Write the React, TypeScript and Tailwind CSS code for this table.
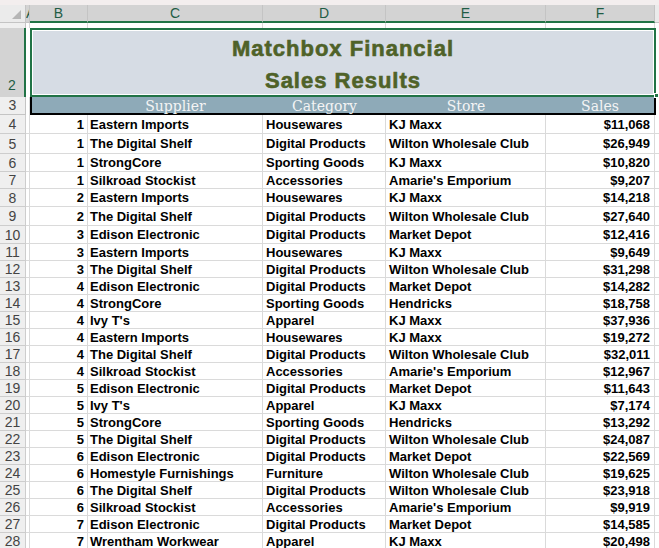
import React from "react";

type Row = [number, string, string, string, string];

const rows: Row[] = [
  [1, "Eastern Imports", "Housewares", "KJ Maxx", "$11,068"],
  [1, "The Digital Shelf", "Digital Products", "Wilton Wholesale Club", "$26,949"],
  [1, "StrongCore", "Sporting Goods", "KJ Maxx", "$10,820"],
  [1, "Silkroad Stockist", "Accessories", "Amarie's Emporium", "$9,207"],
  [2, "Eastern Imports", "Housewares", "KJ Maxx", "$14,218"],
  [2, "The Digital Shelf", "Digital Products", "Wilton Wholesale Club", "$27,640"],
  [3, "Edison Electronic", "Digital Products", "Market Depot", "$12,416"],
  [3, "Eastern Imports", "Housewares", "KJ Maxx", "$9,649"],
  [3, "The Digital Shelf", "Digital Products", "Wilton Wholesale Club", "$31,298"],
  [4, "Edison Electronic", "Digital Products", "Market Depot", "$14,282"],
  [4, "StrongCore", "Sporting Goods", "Hendricks", "$18,758"],
  [4, "Ivy T's", "Apparel", "KJ Maxx", "$37,936"],
  [4, "Eastern Imports", "Housewares", "KJ Maxx", "$19,272"],
  [4, "The Digital Shelf", "Digital Products", "Wilton Wholesale Club", "$32,011"],
  [4, "Silkroad Stockist", "Accessories", "Amarie's Emporium", "$12,967"],
  [5, "Edison Electronic", "Digital Products", "Market Depot", "$11,643"],
  [5, "Ivy T's", "Apparel", "KJ Maxx", "$7,174"],
  [5, "StrongCore", "Sporting Goods", "Hendricks", "$13,292"],
  [5, "The Digital Shelf", "Digital Products", "Wilton Wholesale Club", "$24,087"],
  [6, "Edison Electronic", "Digital Products", "Market Depot", "$22,569"],
  [6, "Homestyle Furnishings", "Furniture", "Wilton Wholesale Club", "$19,625"],
  [6, "The Digital Shelf", "Digital Products", "Wilton Wholesale Club", "$23,918"],
  [6, "Silkroad Stockist", "Accessories", "Amarie's Emporium", "$9,919"],
  [7, "Edison Electronic", "Digital Products", "Market Depot", "$14,585"],
  [7, "Wrentham Workwear", "Apparel", "KJ Maxx", "$20,498"],
];

// excel rows are not all the same height
const heights = [19, 20, 18, 17, 18, 19, 18];

function ColHead({ label, w }: { label: string; w: string }) {
  return (
    <div className={`${w} h-full flex items-center justify-center border-r border-[#c4c4c4] border-b-2 border-b-[#217346] bg-[#d3d3d3] text-[14px] text-[#1f5c44]`}>
      {label}
    </div>
  );
}

export default function App() {
  return (
    <div className="relative w-[659px] h-[548px] overflow-hidden bg-white font-['Liberation_Sans',sans-serif]">
      <div className="h-[5px] bg-[#f3eeee]" />

      {/* column headers */}
      <div className="flex h-[18px]">
        <div className="relative w-[26px] shrink-0 bg-[#ebebeb] border-r border-b border-[#c4c4c4]">
          <div className="absolute right-[4px] bottom-[3px] w-0 h-0 border-l-[9px] border-l-transparent border-b-[9px] border-b-[#b5b5b5]" />
        </div>
        <div className="w-[4px] shrink-0 bg-[#d3d3d3] border-r border-b border-[#c4c4c4] overflow-hidden text-[14px] leading-[16px] text-[#1f5c44]">
          A
        </div>
        <ColHead label="B" w="w-[58px] shrink-0" />
        <ColHead label="C" w="w-[175px] shrink-0" />
        <ColHead label="D" w="w-[123px] shrink-0" />
        <ColHead label="E" w="w-[160px] shrink-0" />
        <ColHead label="F" w="w-[109px] shrink-0" />
        <div className="flex-1 bg-[#ebebeb] border-b border-[#c4c4c4]" />
      </div>

      {/* row 1 (hidden-ish) */}
      <div className="flex h-[5px]">
        <div className="w-[26px] shrink-0 bg-[#efefef] border-r border-[#c4c4c4]" />
        <div className="w-[4px] shrink-0 border-r border-[#dadada]" />
        <div className="w-[58px] shrink-0 border-r border-[#dadada]" />
        <div className="w-[175px] shrink-0 border-r border-[#dadada]" />
        <div className="w-[123px] shrink-0 border-r border-[#dadada]" />
        <div className="w-[160px] shrink-0 border-r border-[#dadada]" />
        <div className="w-[109px] shrink-0 border-r border-[#dadada]" />
      </div>

      {/* row 2 title */}
      <div className="flex h-[69px]">
        <div className="w-[26px] shrink-0 bg-[#d3d3d3] border-r-2 border-[#217346] flex items-end justify-center pb-[5px] text-[14px] leading-none text-[#1f5c44]">
          2
        </div>
        <div className="w-[4px] shrink-0" />
        <div className="w-[626px] shrink-0 border-2 border-[#217346]">
          <div className="h-full border border-white bg-[#d6dce4] flex flex-col items-center pt-[2px] text-[22px] font-bold leading-[32px] tracking-[1px] text-[#4f6228] [-webkit-text-stroke:0.6px_#4f6228]">
            <div>Matchbox Financial</div>
            <div>Sales Results</div>
          </div>
        </div>
      </div>

      {/* row 3 headers */}
      <div className="flex h-[18px]">
        <div className="w-[26px] shrink-0 bg-[#efefef] border-r border-b border-[#c4c4c4] flex items-center justify-center text-[14px] text-[#444]">
          3
        </div>
        <div className="w-[4px] shrink-0 border-r border-[#dadada]" />
        <div className="w-[626px] shrink-0 flex items-center bg-[#8eaab8] border-2 border-t-0 border-black pt-[1px] text-[14px] leading-[16px] text-[#f4f4f4] font-['DejaVu_Serif',serif]">
          <div className="w-[56px] shrink-0" />
          <div className="w-[175px] shrink-0 text-center">Supplier</div>
          <div className="w-[123px] shrink-0 text-center">Category</div>
          <div className="w-[160px] shrink-0 text-center">Store</div>
          <div className="w-[108px] shrink-0 text-center">Sales</div>
        </div>
      </div>

      {/* data */}
      {rows.map((r, i) => (
        <div key={i} className="flex" style={{ height: heights[i] ?? 17 }}>
          <div className="w-[26px] shrink-0 bg-[#efefef] border-r border-b border-[#cdcdcd] flex items-center justify-center pt-[1px] text-[14px] text-[#444]">
            {i + 4}
          </div>
          <div className="w-[4px] shrink-0 border-r border-b border-[#dadada]" />
          <div className="w-[58px] shrink-0 border-r border-b border-[#dadada] flex items-center justify-end pr-[3px] pt-[1px] text-[13px] font-bold text-black">
            {r[0]}
          </div>
          <div className="w-[175px] shrink-0 border-r border-b border-[#dadada] flex items-center pl-[2px] pt-[1px] text-[13px] font-bold text-black whitespace-nowrap">
            {r[1]}
          </div>
          <div className="w-[123px] shrink-0 border-r border-b border-[#dadada] flex items-center pl-[3px] pt-[1px] text-[13px] font-bold text-black whitespace-nowrap">
            {r[2]}
          </div>
          <div className="w-[160px] shrink-0 border-r border-b border-[#dadada] flex items-center pl-[3px] pt-[1px] text-[13px] font-bold text-black whitespace-nowrap">
            {r[3]}
          </div>
          <div className="w-[109px] shrink-0 border-r border-b border-[#dadada] flex items-center justify-end pr-[4px] pt-[1px] text-[13px] font-bold text-black">
            {r[4]}
          </div>
          <div className="flex-1 border-b border-[#dadada]" />
        </div>
      ))}

      {/* fill handle */}
      <div className="absolute left-[654px] top-[93px] w-[5px] h-[5px] bg-[#217346] border border-white" />
    </div>
  );
}
